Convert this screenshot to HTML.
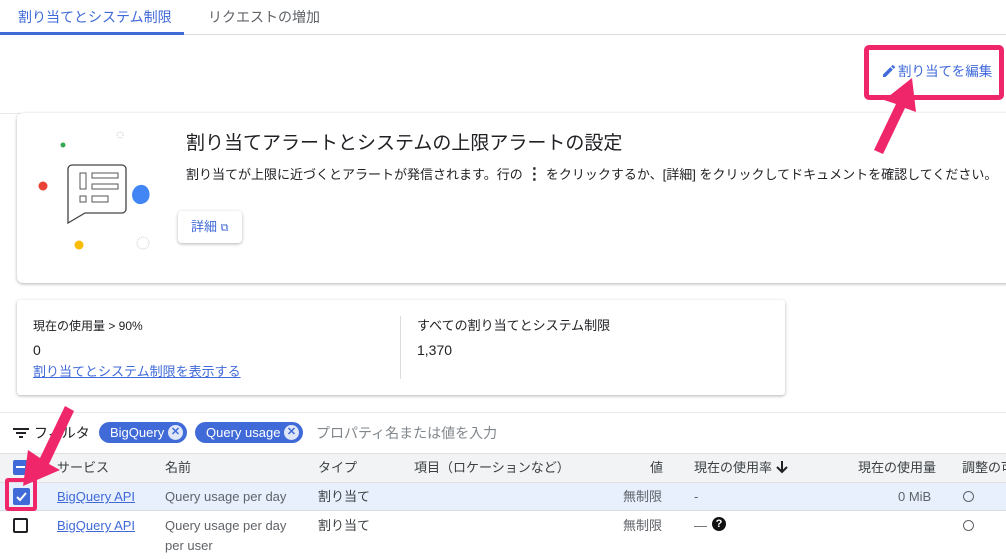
<!DOCTYPE html>
<html><head><meta charset="utf-8"><style>
*{margin:0;padding:0;box-sizing:border-box}
body{width:1006px;height:559px;overflow:hidden;background:#fff;font-family:"Liberation Sans","Noto Sans CJK JP",sans-serif;color:#202124;position:relative}
.a{position:absolute;white-space:nowrap;line-height:16px}
.chip{position:absolute;height:21px;border-radius:11px;background:#3f6ad8;color:#fff;font-size:13px;line-height:21px;padding-left:11px}
.chip i{position:absolute;right:4px;top:3px;width:15px;height:15px;border-radius:50%;background:#dfe6f8;color:#3f6ad8;font-style:normal;font-size:11px;line-height:15px;text-align:center;font-weight:bold}
.th{font-size:13px;color:#3c4043}
.td{font-size:13px;color:#5f6368}
</style></head><body>
<div class="a" style="left:0;top:34px;width:1006px;height:1px;background:#dadce0"></div>
<div class="a" style="left:0;top:32px;width:184px;height:3px;background:#3f6ad8"></div>
<div class="a" style="left:18px;top:9px;font-size:14px;color:#3f6ad8">割り当てとシステム制限</div>
<div class="a" style="left:208px;top:9px;font-size:14px;color:#5f6368">リクエストの増加</div>

<div class="a" style="left:0;top:113px;width:1006px;height:1px;background:#e8eaed"></div>
<div class="a" style="left:17px;top:113px;width:1000px;height:170px;border-radius:6px;box-shadow:0 1px 3px rgba(0,0,0,.3);background:#fff"></div>
<svg class="a" style="left:30px;top:125px" width="130" height="130">
<circle cx="33" cy="20" r="2.5" fill="#34a853"/>
<circle cx="13" cy="61" r="4.5" fill="#ea4335"/>
<circle cx="49" cy="120" r="4.5" fill="#fbbc04"/>
<path d="M110 60c8-1 11 8 9 13-2 6-10 8-14 4-6-6-2-16 5-17z" fill="#4285f4"/>
<circle cx="90" cy="10" r="3" fill="none" stroke="#ccc" stroke-dasharray="1 1"/>
<circle cx="113" cy="118" r="6" fill="none" stroke="#ccc" stroke-dasharray="1 1"/>
<path d="M42 40h50a4 4 0 0 1 4 4v40a4 4 0 0 1-4 4H55L38 98V44a4 4 0 0 1 4-4z" fill="#fff" stroke="#444" stroke-width="1.3"/>
<rect x="50" y="48" width="6" height="16" fill="none" stroke="#555"/>
<rect x="62" y="48" width="26" height="5" fill="none" stroke="#555"/>
<rect x="62" y="59" width="26" height="5" fill="none" stroke="#555"/>
<rect x="50" y="71" width="6" height="6" fill="none" stroke="#555"/>
<rect x="62" y="71" width="16" height="6" fill="none" stroke="#555"/>
</svg>
<div class="a" style="left:186px;top:133px;font-size:19px;line-height:22px">割り当てアラートとシステムの上限アラートの設定</div>
<div class="a" style="left:186px;top:167px;font-size:13px">割り当てが上限に近づくとアラートが発信されます。行の <b style="font-size:16px">&#8942;</b> をクリックするか、[詳細] をクリックしてドキュメントを確認してください。</div>
<div class="a" style="left:178px;top:211px;width:64px;height:32px;border-radius:4px;box-shadow:0 1px 3px rgba(0,0,0,.3);background:#fff;font-size:13px;color:#3f6ad8;padding:8px 0 0 13px">詳細 <span style="font-size:11px">&#10697;</span></div>

<div class="a" style="left:864px;top:45px;width:140px;height:55px;border:5px solid #f0266b;border-radius:5px"></div>
<svg class="a" style="left:881px;top:63px" width="16" height="16" viewBox="0 0 24 24"><path d="M3 17.25V21h3.75L17.81 9.94l-3.75-3.75L3 17.25zM20.71 7.04a1 1 0 0 0 0-1.41l-2.34-2.34a1 1 0 0 0-1.41 0l-1.83 1.83 3.75 3.75 1.83-1.83z" fill="#3f6ad8"/></svg>
<div class="a" style="left:898px;top:64px;font-size:13.5px;color:#3f6ad8">割り当てを編集</div>

<div class="a" style="left:17px;top:300px;width:768px;height:95px;border-radius:3px;box-shadow:0 1px 3px rgba(0,0,0,.3);background:#fff"></div>
<div class="a" style="left:400px;top:316px;width:1px;height:63px;background:#dadce0"></div>
<div class="a" style="left:33px;top:318px;font-size:12px">現在の使用量 &gt; 90%</div>
<div class="a" style="left:33px;top:342px;font-size:14px">0</div>
<div class="a" style="left:33px;top:364px;font-size:13px;color:#3f6ad8;text-decoration:underline">割り当てとシステム制限を表示する</div>
<div class="a" style="left:417px;top:318px;font-size:13px">すべての割り当てとシステム制限</div>
<div class="a" style="left:417px;top:342px;font-size:14px">1,370</div>

<div class="a" style="left:0;top:412px;width:1006px;height:1px;background:#e8eaed"></div>
<svg class="a" style="left:13px;top:427px" width="16" height="12"><rect x="0" y="1" width="16" height="2" fill="#202124"/><rect x="3" y="5" width="10" height="2" fill="#202124"/><rect x="6" y="9" width="4" height="2" fill="#202124"/></svg>
<div class="a" style="left:34px;top:425px;font-size:14px">フィルタ</div>
<div class="chip" style="left:99px;top:422px;width:88px">BigQuery<i>✕</i></div>
<div class="chip" style="left:195px;top:422px;width:108px">Query usage<i>✕</i></div>
<div class="a" style="left:316px;top:425px;font-size:14px;color:#80868b">プロパティ名または値を入力</div>

<div class="a" style="left:0;top:453px;width:1006px;height:30px;background:#f1f3f4;border-top:1px solid #e0e0e0;border-bottom:1px solid #e0e0e0"></div>
<div class="a" style="left:0;top:483px;width:1006px;height:28px;background:#e8f0fe;border-bottom:1px solid #dadce0"></div>
<div class="a" style="left:13px;top:460px;width:15px;height:15px;background:#3f6ad8;border-radius:2px"><div style="position:absolute;left:3px;top:6px;width:9px;height:2px;background:#fff"></div></div>
<div class="a th" style="left:57px;top:460px">サービス</div>
<div class="a th" style="left:165px;top:460px">名前</div>
<div class="a th" style="left:318px;top:460px">タイプ</div>
<div class="a th" style="left:414px;top:460px">項目（ロケーションなど）</div>
<div class="a th" style="left:650px;top:460px">値</div>
<div class="a th" style="left:694px;top:460px">現在の使用率</div>
<svg class="a" style="left:775px;top:460px" width="14" height="14" viewBox="0 0 14 14"><path d="M7 1v11M2 7l5 5 5-5" stroke="#202124" stroke-width="2" fill="none"/></svg>
<div class="a th" style="left:858px;top:460px">現在の使用量</div>
<div class="a th" style="left:962px;top:460px">調整の可</div>

<div class="a" style="left:5px;top:478px;width:32px;height:33px;border:4px solid #f0266b;border-radius:3px"></div>
<div class="a" style="left:13px;top:488px;width:17px;height:17px;background:#3f6ad8;border-radius:2px"></div>
<svg class="a" style="left:13px;top:488px" width="17" height="17"><path d="M4 9l3 3 6-7" stroke="#fff" stroke-width="2" fill="none"/></svg>
<div class="a" style="left:57px;top:489px;font-size:13px;color:#3f6ad8;text-decoration:underline">BigQuery API</div>
<div class="a td" style="left:165px;top:489px">Query usage per day</div>
<div class="a td" style="left:318px;top:489px;color:#3c4043">割り当て</div>
<div class="a td" style="left:623px;top:489px">無制限</div>
<div class="a td" style="left:694px;top:489px">-</div>
<div class="a td" style="left:898px;top:489px">0 MiB</div>
<div class="a" style="left:963px;top:491px;width:11px;height:11px;border:1px solid #5f6368;border-radius:50%"></div>

<div class="a" style="left:13px;top:518px;width:15px;height:15px;border:2px solid #202124;border-radius:2px"></div>
<div class="a" style="left:57px;top:518px;font-size:13px;color:#3f6ad8;text-decoration:underline">BigQuery API</div>
<div class="a td" style="left:165px;top:518px;line-height:20px;margin-top:-2px">Query usage per day<br>per user</div>
<div class="a td" style="left:318px;top:518px;color:#3c4043">割り当て</div>
<div class="a td" style="left:623px;top:518px">無制限</div>
<div class="a td" style="left:694px;top:518px">—</div>
<div class="a" style="left:712px;top:517px;width:14px;height:14px;border-radius:50%;background:#111;color:#fff;font-size:11px;font-weight:bold;text-align:center;line-height:14px">?</div>
<div class="a" style="left:963px;top:520px;width:11px;height:11px;border:1px solid #5f6368;border-radius:50%"></div>

<svg class="a" style="left:0;top:0" width="1006" height="559">
<polygon points="912,78 884,100 896,104 874,150 883,154 905,108 916,112" fill="#f0266b"/>
<polygon points="23,486 28,450 40,458 65,406 74,411 49,464 60,470" fill="#f0266b"/>
</svg>
</body></html>
